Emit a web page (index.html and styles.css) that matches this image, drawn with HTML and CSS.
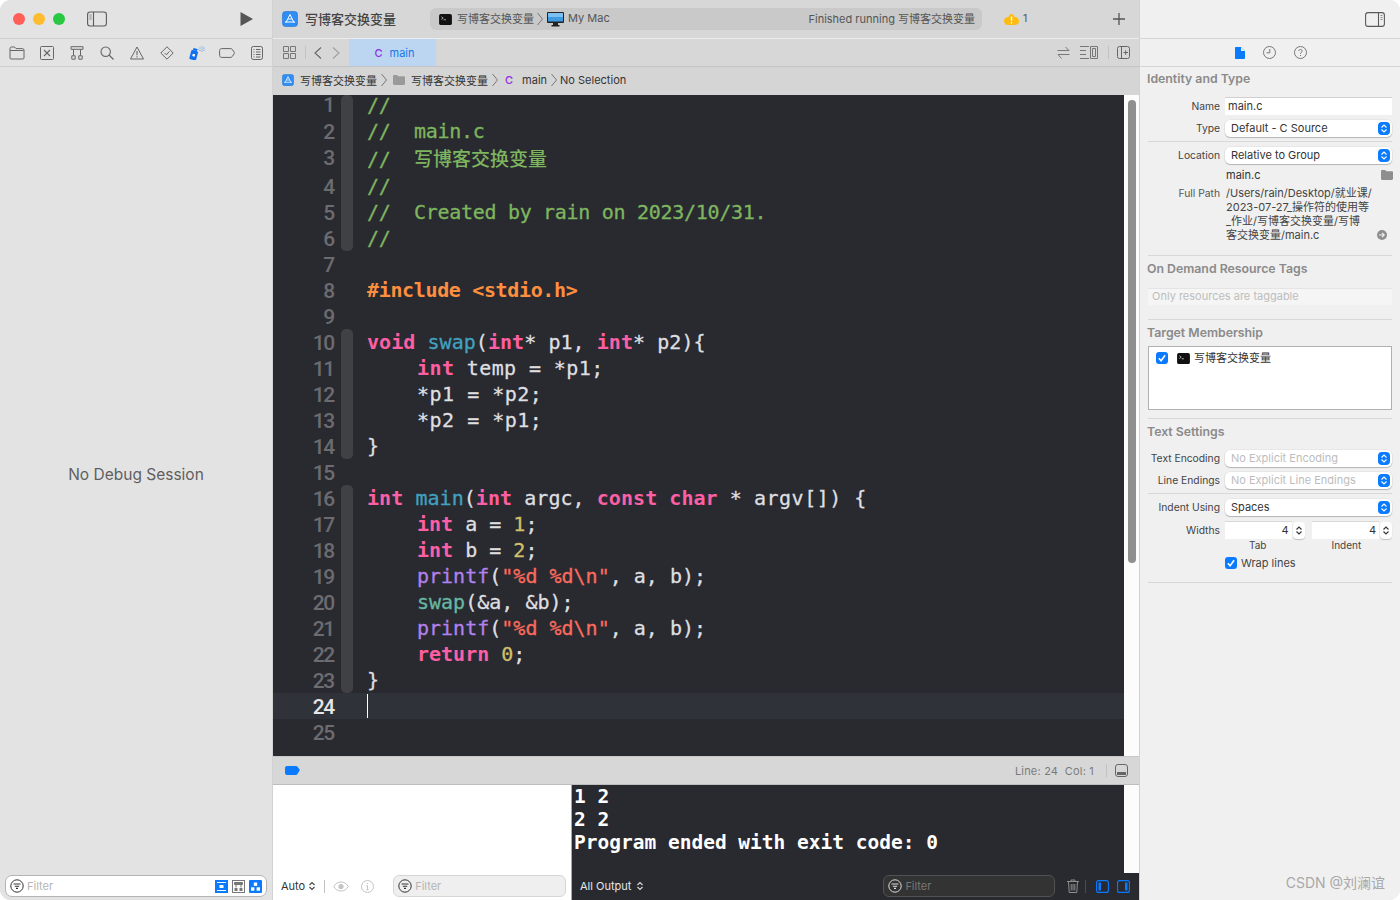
FILE: index.html
```html
<!DOCTYPE html>
<html lang="zh">
<head>
<meta charset="utf-8">
<title>写博客交换变量</title>
<link rel="stylesheet" href="styles.css">
</head>
<body>
<svg class="defs" width="0" height="0">
  <symbol id="filter" viewBox="0 0 14 14"><circle cx="7" cy="7" r="6.2" fill="none" stroke="currentColor" stroke-width="1"/><path d="M3.5 5h7M4.8 7.2h4.4M6 9.4h2" stroke="currentColor" stroke-width="1.1" fill="none"/></symbol>
  <symbol id="term" viewBox="0 0 14 12"><rect width="14" height="12" rx="2" fill="#111"/><path d="M2.5 3l2 1.5-2 1.5M5 6.3h2.5" stroke="#ddd" stroke-width=".8" fill="none"/></symbol>
  <symbol id="app" viewBox="0 0 16 16"><rect x=".5" y=".5" width="15" height="15" rx="3" fill="#2f8df5" stroke="#1a6fd0" stroke-width=".6"/><path d="M8 3.5L4 11.5M8 3.5l4 8M3 11h10M6 8h4" stroke="#fff" stroke-width="1" fill="none"/></symbol>
  <symbol id="updown" viewBox="0 0 8 10"><path d="M1.5 4L4 1.5 6.5 4M1.5 6L4 8.5 6.5 6" fill="none" stroke="currentColor" stroke-width="1.1"/></symbol>
</svg>
<div class="window">

  <aside class="left">
    <div class="titlebar left-title">
      <span class="light red"></span><span class="light yellow"></span><span class="light green"></span>
      <svg class="side-toggle" width="20" height="16" viewBox="0 0 20 16"><rect x=".6" y="1" width="18.8" height="14" rx="2.5" fill="none" stroke="#5a5a5a" stroke-width="1.1"/><path d="M6.5 1v14" stroke="#5a5a5a" stroke-width="1.1"/><path d="M2.3 4h2.4M2.3 6h2.4M2.3 8h2.4" stroke="#8a8a8a"/></svg>
      <svg class="play" width="13" height="14" viewBox="0 0 13 14"><path d="M.5 0L13 7 .5 14z" fill="#555"/></svg>
    </div>
    <nav class="navtabs">
      <span class="navicon"><svg width="16" height="14" viewBox="0 0 16 14"><path d="M1 3V2.4C1 1.6 1.6 1 2.4 1h3.2l1.4 1.6h6.6c.8 0 1.4.6 1.4 1.4v8c0 .6-.5 1-1 1H2c-.6 0-1-.4-1-1zM1 4.5h13.5" fill="none" stroke="#666" stroke-width="1"/></svg></span>
      <span class="navicon"><svg width="14" height="14" viewBox="0 0 14 14"><rect x=".5" y=".5" width="13" height="13" rx="1" fill="none" stroke="#666"/><path d="M4 4l6 6M10 4l-6 6" stroke="#666" stroke-width="1.1"/><circle cx="7" cy="7" r="1" fill="#666"/></svg></span>
      <span class="navicon"><svg width="14" height="14" viewBox="0 0 14 14"><path d="M1 .7h12v2.6H1zM3.5 3.3v6.2M10.5 3.3v6.2M1.8 9.8h3.4v3.4H1.8zM8.8 9.8h3.4v3.4H8.8z" fill="none" stroke="#666"/></svg></span>
      <span class="navicon"><svg width="14" height="14" viewBox="0 0 14 14"><circle cx="5.7" cy="5.7" r="4.7" fill="none" stroke="#666" stroke-width="1.1"/><path d="M9 9l4.5 4.5" stroke="#666" stroke-width="1.3"/></svg></span>
      <span class="navicon"><svg width="14" height="14" viewBox="0 0 14 14"><path d="M7 1L13.5 13H.5z" fill="none" stroke="#666" stroke-linejoin="round"/><path d="M7 5v4.2M7 10.3v1.2" stroke="#666" stroke-width="1.1"/></svg></span>
      <span class="navicon"><svg width="14" height="14" viewBox="0 0 14 14"><path d="M7 .8L13.2 7 7 13.2.8 7z" fill="none" stroke="#666" stroke-linejoin="round"/><path d="M4.6 7l1.8 1.8 3-3.4" fill="none" stroke="#666"/></svg></span>
      <span class="navicon"><svg width="16" height="14" viewBox="0 0 16 14"><g transform="rotate(15 5 8)"><rect x="1.5" y="4.5" width="7" height="9.5" rx="1.3" fill="#0f6ff0"/><rect x="3" y="2.2" width="4" height="2.300" fill="#0f6ff0"/><rect x="3.800" y="8" width="2.400" height="2.400" fill="#fff"/></g><path d="M8.500 3.500h1M10.500 2h1M10.500 4.500h1M12.500 .8h1M12.500 3h1M12.500 5.200h1M14.500 2h1M14.500 4.200h1" stroke="#4a8fe8" stroke-width=".9"/></svg></span>
      <span class="navicon"><svg width="16" height="10" viewBox="0 0 16 10"><path d="M2.500.6h9.300c.5 0 .9.200 1.200.5l2.300 3.200c.2.400.2.800 0 1.200L13 8.800c-.3.400-.7.600-1.200.6H2.500C1.400 9.400.6 8.600.6 7.500v-5C.6 1.400 1.400.6 2.500.6z" fill="none" stroke="#666"/></svg></span>
      <span class="navicon"><svg width="12" height="14" viewBox="0 0 12 14"><rect x=".5" y=".5" width="11" height="13" rx="1.800" fill="none" stroke="#666"/><path d="M2.500 3.500h1M5 3.500h4.500M2.500 6h1M5 6h4.500M2.500 8.500h1M5 8.500h4.500M2.500 11h1M5 11h4.500" stroke="#666"/></svg></span>
    </nav>
    <div class="nodebug">No Debug Session</div>
    <div class="left-filter">
      <svg class="fi"><use href="#filter"/></svg>
      <span class="ph">Filter</span>
      <svg class="sq sq1" width="13" height="13" viewBox="0 0 13 13"><rect width="13" height="13" fill="#0a7aff"/><path d="M2 2.500h9M2 10.500h9" stroke="#fff"/><rect x="4.500" y="5" width="4" height="3" fill="#fff"/></svg>
      <svg class="sq" width="13" height="13" viewBox="0 0 13 13"><rect x=".5" y=".5" width="12" height="12" fill="#fff" stroke="#777"/><path d="M2.500 2.500h8v2h-8zM4 4.500v3M9 4.500v3" fill="#777" stroke="#777"/><rect x="2.500" y="8" width="3" height="3" fill="#777"/><rect x="7.500" y="8" width="3" height="3" fill="#777"/></svg>
      <svg class="sq" width="13" height="13" viewBox="0 0 13 13"><rect width="13" height="13" rx="1" fill="#0a7aff"/><rect x="4.800" y="2.500" width="3.400" height="3.400" fill="#fff"/><rect x="2" y="7.300" width="3.400" height="3.400" fill="#fff"/><rect x="7.600" y="7.300" width="3.400" height="3.400" fill="#fff"/></svg>
    </div>
  </aside>

  <main class="center">
    <header class="titlebar center-title">
      <svg class="appicon"><use href="#app"/></svg>
      <span class="project">写博客交换变量</span>
      <div class="scheme">
        <svg class="termicon"><use href="#term"/></svg>
        <span>写博客交换变量</span>
        <svg class="chev" width="6" height="14" viewBox="0 0 6 14"><path d="M.5 1L5.500 7 .5 13" fill="none" stroke="#777"/></svg>
        <svg class="mac" width="17" height="15" viewBox="0 0 17 15"><rect width="17" height="11" rx="1" fill="#222"/><rect x="1" y="1" width="15" height="8.500" fill="#3f9be0"/><rect x="1" y="1" width="15" height="4" fill="#7cc0ef"/><path d="M6 11h5v2H6zM4.500 13h8v1.500h-8z" fill="#222"/></svg>
        <span class="mymac">My Mac</span>
        <span class="status">Finished running 写博客交换变量</span>
      </div>
      <svg class="warn" width="15" height="11" viewBox="0 0 15 11"><path d="M7.500 0c1 0 1.700.600 2.200 1.500l.6 1.300C13 3 15 4.700 15 7c0 2.300-1.500 4-3.600 4H3.600C1.500 11 0 9.300 0 7c0-2.300 2-4 4.700-4.200l.6-1.300C5.800.6 6.500 0 7.500 0z" fill="#febc11"/><path d="M7.500 2.500v4.300M7.500 8v1.500" stroke="#fff" stroke-width="1.300"/></svg>
      <span class="warncount">1</span>
      <svg class="plus" width="12" height="12" viewBox="0 0 12 12"><path d="M6 0v12M0 6h12" stroke="#555" stroke-width="1.300"/></svg>
    </header>
    <div class="tabbar">
      <svg class="gridicon" width="13" height="13" viewBox="0 0 13 13"><path d="M.5.500h5v5h-5zM7.500.500h5v5h-5zM.5 7.500h5v5h-5zM7.500 7.500h5v5h-5z" fill="none" stroke="#777"/></svg>
      <span class="vsep"></span>
      <svg class="back" width="8" height="12" viewBox="0 0 8 12"><path d="M7 .5L1 6l6 5.500" fill="none" stroke="#666" stroke-width="1.100"/></svg>
      <svg class="fwd" width="8" height="12" viewBox="0 0 8 12"><path d="M1 .5L7 6l-6 5.500" fill="none" stroke="#a0a0a0" stroke-width="1.100"/></svg>
      <div class="tab"><span class="c">C</span><span>main</span></div>
      <svg class="swapi" width="13" height="13" viewBox="0 0 13 13"><path d="M.5 4.500h11.500M8.500 1l3.500 3.500M12.500 8.500H1M4.500 12.500L1 8.500" fill="none" stroke="#777"/></svg>
      <svg class="linesi" width="18" height="13" viewBox="0 0 18 13"><path d="M0 .5h9M0 4.500h6M0 8.500h6M0 12.500h9" stroke="#777"/><path d="M10.500.5h7v12h-7zM12.500 2.500h3v8h-3z" fill="none" stroke="#777"/></svg>
      <span class="vsep rsep"></span>
      <svg class="addi" width="13" height="13" viewBox="0 0 13 13"><rect x=".5" y=".5" width="12" height="12" rx="2" fill="none" stroke="#666"/><path d="M4.500.5v12M6.500 6.500h4.500M8.700 4.300v4.500" stroke="#666"/></svg>
    </div>
    <div class="jumpbar">
      <svg class="appicon small"><use href="#app"/></svg>
      <span>写博客交换变量</span>
      <svg class="chev" width="6" height="14" viewBox="0 0 6 14"><path d="M.5 1L5.500 7 .5 13" fill="none" stroke="#777"/></svg>
      <svg class="folder" width="12" height="10" viewBox="0 0 12 10"><path d="M0 1.200C0 .5.500 0 1.200 0h3l1 1.300h5.600c.7 0 1.200.5 1.200 1.200v6.300c0 .7-.5 1.200-1.200 1.200H1.200C.5 10 0 9.500 0 8.800z" fill="#9a9a9a"/></svg>
      <span>写博客交换变量</span>
      <svg class="chev" width="6" height="14" viewBox="0 0 6 14"><path d="M.5 1L5.500 7 .5 13" fill="none" stroke="#777"/></svg>
      <span class="c cj">C</span>
      <span>main</span>
      <svg class="chev" width="6" height="14" viewBox="0 0 6 14"><path d="M.5 1L5.500 7 .5 13" fill="none" stroke="#777"/></svg>
      <span class="nosel">No Selection</span>
    </div>

    <section class="editor">
      <div class="code">
        <div class="ln first"><span class="num">1</span><span class="fold start"></span><span class="t cm">//</span></div>
        <div class="ln"><span class="num">2</span><span class="fold"></span><span class="t cm">//  main.c</span></div>
        <div class="ln tall"><span class="num">3</span><span class="fold"></span><span class="t cm">//  <span class="cjk">写博客交换变量</span></span></div>
        <div class="ln"><span class="num">4</span><span class="fold"></span><span class="t cm">//</span></div>
        <div class="ln"><span class="num">5</span><span class="fold"></span><span class="t cm">//  Created by rain on 2023/10/31.</span></div>
        <div class="ln"><span class="num">6</span><span class="fold end"></span><span class="t cm">//</span></div>
        <div class="ln"><span class="num">7</span><span class="nofold"></span></div>
        <div class="ln"><span class="num">8</span><span class="nofold"></span><span class="t pp">#include &lt;stdio.h&gt;</span></div>
        <div class="ln"><span class="num">9</span><span class="nofold"></span></div>
        <div class="ln"><span class="num">10</span><span class="fold start"></span><span class="t wide1"><b class="kw">void</b> <span class="fn">swap</span>(<b class="kw">int</b>* p1, <b class="kw">int</b>* p2){</span></div>
        <div class="ln"><span class="num">11</span><span class="fold"></span><span class="t ind wide2"><b class="kw">int</b> temp = *p1;</span></div>
        <div class="ln"><span class="num">12</span><span class="fold"></span><span class="t ind wide3">*p1 = *p2;</span></div>
        <div class="ln"><span class="num">13</span><span class="fold"></span><span class="t ind wide3">*p2 = *p1;</span></div>
        <div class="ln"><span class="num">14</span><span class="fold end"></span><span class="t">}</span></div>
        <div class="ln"><span class="num">15</span><span class="nofold"></span></div>
        <div class="ln"><span class="num">16</span><span class="fold start"></span><span class="t wide1"><b class="kw">int</b> <span class="fn">main</span>(<b class="kw">int</b> argc, <b class="kw">const</b> <b class="kw">char</b> * <span class="wide3">argv[]) {</span></span></div>
        <div class="ln"><span class="num">17</span><span class="fold"></span><span class="t ind"><b class="kw">int</b> a = <span class="n">1</span>;</span></div>
        <div class="ln"><span class="num">18</span><span class="fold"></span><span class="t ind"><b class="kw">int</b> b = <span class="n">2</span>;</span></div>
        <div class="ln"><span class="num">19</span><span class="fold"></span><span class="t ind"><span class="pf">printf</span>(<span class="s">"%d %d\n"</span>, a, b);</span></div>
        <div class="ln"><span class="num">20</span><span class="fold"></span><span class="t ind"><span class="call">swap</span>(&amp;a, &amp;b);</span></div>
        <div class="ln"><span class="num">21</span><span class="fold"></span><span class="t ind"><span class="pf">printf</span>(<span class="s">"%d %d\n"</span>, a, b);</span></div>
        <div class="ln"><span class="num">22</span><span class="fold"></span><span class="t ind"><b class="kw">return</b> <span class="n">0</span>;</span></div>
        <div class="ln"><span class="num">23</span><span class="fold end"></span><span class="t">}</span></div>
        <div class="ln cur"><span class="num">24</span><span class="nofold"></span><span class="caret"></span></div>
        <div class="ln"><span class="num">25</span><span class="nofold"></span></div>
      </div>
      <div class="vscroll"><span class="thumb"></span></div>
    </section>

    <div class="debugbar">
      <svg width="15" height="9" viewBox="0 0 15 9"><path d="M2 0h9c.6 0 1 .2 1.300.6l2.300 3c.2.400.2.500 0 .9l-2.300 3.800c-.3.400-.7.700-1.300.7H2c-1.100 0-2-.9-2-2V2C0 .9.900 0 2 0z" fill="#0a7aff"/></svg>
      <span class="linecol">Line: 24&nbsp;&nbsp;Col: 1</span>
      <span class="vsep"></span>
      <svg class="panel" width="13" height="13" viewBox="0 0 13 13"><rect x=".5" y=".5" width="12" height="12" rx="2.500" fill="none" stroke="#666"/><rect x="2" y="8" width="9" height="3" fill="#666"/></svg>
    </div>

    <section class="console">
      <div class="vars">
        <div class="spacer"></div>
        <div class="cbar">
          <span class="auto">Auto</span>
          <svg class="ud"><use href="#updown"/></svg>
          <span class="vsep"></span>
          <svg class="eye" width="16" height="11" viewBox="0 0 16 11"><path d="M.8 5.500C2.500 2.300 5 1 8 1s5.500 1.300 7.200 4.500C13.500 8.700 11 10 8 10S2.500 8.700.8 5.500z" fill="none" stroke="#c4c4c4"/><circle cx="8" cy="5.500" r="2.600" fill="#c4c4c4"/></svg>
          <svg class="info" width="13" height="13" viewBox="0 0 13 13"><circle cx="6.500" cy="6.500" r="6" fill="none" stroke="#c4c4c4"/><path d="M6.500 5.500v4.300M5.300 9.900h2.400M5.500 5.500h1M6.500 3v1" stroke="#c4c4c4"/></svg>
          <div class="filterbox light-f"><svg class="fi"><use href="#filter"/></svg><span class="ph">Filter</span></div>
        </div>
      </div>
      <div class="output">
        <div class="outrow">
          <pre class="outtext">1 2
2 2
Program ended with exit code: 0</pre>
          <div class="outscroll"></div>
        </div>
        <div class="cbar dark">
          <span class="allout">All Output</span>
          <svg class="ud"><use href="#updown"/></svg>
          <div class="filterbox dark-f"><svg class="fi"><use href="#filter"/></svg><span class="ph">Filter</span></div>
          <svg class="trash" width="12" height="14" viewBox="0 0 12 14"><path d="M0 2.500h12M4 2.500V1h4v1.500M1.500 2.500l.7 11h7.600l.7-11M4.200 5v6.500M6 5v6.500M7.800 5v6.500" fill="none" stroke="#8e8e8e"/></svg>
          <span class="vsep dsep"></span>
          <svg class="pane" width="13" height="13" viewBox="0 0 13 13"><rect x=".6" y=".6" width="11.800" height="11.800" rx="2" fill="none" stroke="#0a7aff" stroke-width="1.100"/><rect x="2.500" y="2.500" width="2.500" height="8" fill="#0a7aff"/></svg>
          <svg class="pane pane2" width="13" height="13" viewBox="0 0 13 13"><rect x=".6" y=".6" width="11.800" height="11.800" rx="2" fill="none" stroke="#0a7aff" stroke-width="1.100"/><rect x="8" y="2.500" width="2.500" height="8" fill="#0a7aff"/></svg>
        </div>
      </div>
    </section>
  </main>

  <aside class="right">
    <div class="titlebar right-title">
      <svg width="20" height="15" viewBox="0 0 20 15"><rect x=".6" y=".6" width="18.800" height="13.800" rx="2.500" fill="none" stroke="#5a5a5a" stroke-width="1.100"/><path d="M13.500.6v13.800" stroke="#5a5a5a" stroke-width="1.100"/><path d="M15.500 3.500h2M15.500 5.500h2M15.500 7.500h2" stroke="#8a8a8a"/></svg>
    </div>
    <div class="insp-tabs">
      <svg width="10" height="12" viewBox="0 0 10 12"><path d="M1 0h5l4 4v7c0 .6-.4 1-1 1H1c-.6 0-1-.4-1-1V1c0-.6.4-1 1-1z" fill="#0a7aff"/><path d="M6 0v4h4z" fill="#f0f0f0"/></svg>
      <svg width="13" height="13" viewBox="0 0 13 13"><circle cx="6.500" cy="6.500" r="6" fill="none" stroke="#777"/><path d="M6.800 3v3.800H3.500" fill="none" stroke="#777"/></svg>
      <svg width="13" height="13" viewBox="0 0 13 13"><circle cx="6.500" cy="6.500" r="6" fill="none" stroke="#777"/><path d="M4.800 5c0-1 .8-1.500 1.700-1.500S8.200 4 8.200 5c0 1.200-1.700 1.300-1.700 2.700M6.500 9v1" fill="none" stroke="#777"/></svg>
    </div>

    <section class="sec sec1">
      <h3>Identity and Type</h3>
      <div class="row m11"><label>Name</label><span class="input">main.c</span></div>
      <div class="row m4"><label>Type</label><span class="select">Default - C Source<svg class="bluebtn"><use href="#updown"/></svg></span></div>
      <div class="hr"></div>
      <div class="row m4"><label>Location</label><span class="select">Relative to Group<svg class="bluebtn"><use href="#updown"/></svg></span></div>
      <div class="row m4 short"><label></label><span class="value">main.c</span>
        <svg width="12" height="10" viewBox="0 0 12 10"><path d="M0 1.200C0 .5.500 0 1.200 0h3l1 1.300h5.600c.7 0 1.200.5 1.200 1.200v6.300c0 .7-.5 1.200-1.200 1.200H1.200C.5 10 0 9.500 0 8.800z" fill="#8e8e8e"/></svg>
      </div>
      <div class="row m4 path"><label>Full Path</label><span class="pathtext">/Users/rain/Desktop/就业课/<br>2023-07-27_操作符的使用等<br>_作业/写博客交换变量/写博<br>客交换变量/main.c</span>
        <svg class="goto" width="10" height="10" viewBox="0 0 10 10"><circle cx="5" cy="5" r="5" fill="#8e8e8e"/><path d="M2 5h5M5 2.800L7.200 5 5 7.200" fill="none" stroke="#f0f0f0" stroke-width="1.200"/></svg>
      </div>
    </section>

    <section class="sec sec2">
      <h3>On Demand Resource Tags</h3>
      <div class="tagfield">Only resources are taggable</div>
    </section>

    <section class="sec sec3">
      <h3>Target Membership</h3>
      <div class="targets">
        <span class="check"><svg width="12" height="12" viewBox="0 0 12 12"><path d="M2.800 6.200l2.300 2.500 4-5.400" fill="none" stroke="#fff" stroke-width="1.600"/></svg></span>
        <svg class="termicon"><use href="#term"/></svg>
        <span>写博客交换变量</span>
      </div>
    </section>

    <section class="sec sec4">
      <h3>Text Settings</h3>
      <div class="row m10"><label>Text Encoding</label><span class="select off">No Explicit Encoding<svg class="bluebtn"><use href="#updown"/></svg></span></div>
      <div class="row m4"><label>Line Endings</label><span class="select off">No Explicit Line Endings<svg class="bluebtn"><use href="#updown"/></svg></span></div>
      <div class="hr"></div>
      <div class="row m4"><label>Indent Using</label><span class="select">Spaces<svg class="bluebtn"><use href="#updown"/></svg></span></div>
      <div class="row m5"><label>Widths</label>
        <span class="num-input">4</span><span class="stepper"><svg><use href="#updown"/></svg></span>
        <span class="num-input second">4</span><span class="stepper"><svg><use href="#updown"/></svg></span>
      </div>
      <div class="subl"><span class="tab-l">Tab</span><span class="ind-l">Indent</span></div>
      <div class="wrap">
        <span class="check small"><svg width="12" height="12" viewBox="0 0 12 12"><path d="M2.800 6.200l2.300 2.500 4-5.400" fill="none" stroke="#fff" stroke-width="1.600"/></svg></span>
        <span>Wrap lines</span>
      </div>
    </section>
    <div class="watermark">CSDN @刘澜谊</div>
  </aside>
</div>
</body>
</html>
```

FILE: styles.css
```css
* { box-sizing: border-box; }
html, body { margin: 0; height: 100%; background: #fff; overflow: hidden; }
body { font-family: Inter, "Noto Sans CJK SC", sans-serif; font-size: 11px; color: #333; }
.defs { position: absolute; }
svg { display: block; flex: none; }
.window { width: 1400px; height: 900px; display: grid; grid-template-columns: 273px 866px 261px; border-radius: 11px; overflow: hidden; background: #e3e3e3; }
.titlebar { height: 39px; display: flex; align-items: center; border-bottom: 1px solid #cfcfcf; flex: none; }

/* left */
.left { background: #e3e3e3; display: flex; flex-direction: column; border-right: 1px solid #d2d2d2; height: 900px; }
.left-title { padding-left: 13px; }
.light { width: 12px; height: 12px; border-radius: 50%; margin-right: 8px; }
.red { background: #ff5f57; } .yellow { background: #febc2e; } .green { background: #28c840; }
.side-toggle { margin-left: 14px; }
.play { margin-left: 133px; }
.navtabs { height: 28px; display: flex; align-items: center; padding-left: 2px; border-bottom: 1px solid #cfcfcf; flex: none; }
.navicon { width: 30px; display: flex; justify-content: center; }
.nodebug { flex: 1; display: flex; align-items: center; justify-content: center; font-size: 15.500px; color: #5f5f5f; padding-top: 7px; }
.left-filter { margin: 0 5px 3px; height: 22px; border-radius: 7px; background: #fff; border: 1px solid #b4b4b4; display: flex; align-items: center; padding: 0 4px; flex: none; width: 262px; }
.fi { width: 14px; height: 14px; color: #333; flex: none; }
.ph { color: #b5b5b5; margin-left: 3px; font-size: 11px; flex: 1; }
.sq { margin-left: 4px; }

/* center */
.center { display: flex; flex-direction: column; height: 900px; min-width: 0; background: #d7d7d7; }
.center-title { padding-left: 9px; border-bottom-color: #ececec; }
.appicon { width: 16px; height: 16px; }
.appicon.small { width: 12px; height: 12px; }
.project { margin-left: 7px; font-size: 13px; font-weight: 500; color: #444; width: 125px; padding-bottom: 2px; }
.scheme { width: 552px; height: 22px; background: #c9c9c9; border-radius: 6px; display: flex; align-items: center; padding: 0 7px 0 9px; color: #555; font-size: 11px; flex: none; }
.scheme span { padding-bottom: 2px; }
.termicon { width: 13px; height: 11px; margin-right: 5px; }
.scheme .chev { margin: 0 3px 0 3px; }
.mac { margin-left: 1px; }
.mymac { margin-left: 4px; }
.status { margin-left: auto; }
.warn { margin-left: 22px; }
.warncount { margin-left: 4px; color: #555; font-size: 10.500px; padding-bottom: 1px; }
.plus { margin-left: 86px; }
.tabbar { height: 28px; display: flex; align-items: center; padding-left: 10px; border-bottom: 1px solid #c4c4c4; flex: none; }
.vsep { width: 1px; height: 13px; background: #c2c2c2; display: block; flex: none; }
.tabbar > .vsep:first-of-type { margin-left: 9px; }
.back { margin-left: 8px; }
.fwd { margin-left: 10px; }
.tab { width: 87px; height: 27px; margin-left: 9px; background: #bcd6f1; display: flex; align-items: center; justify-content: center; gap: 7px; color: #1478ea; font-size: 11px; padding-left: 4px; flex: none; }
.c { color: #8e2fe8; font-weight: 500; }
.swapi { margin-left: auto; }
.linesi { margin-left: 10px; }
.tabbar > .rsep { margin: 0 8px 0 10px; }
.addi { margin-right: 9px; }
.jumpbar { height: 28px; display: flex; align-items: center; padding: 0 0 2px 9px; color: #333; font-size: 11px; background: #d5d5d5; flex: none; }
.jumpbar .appicon { margin-right: 6px; }
.jumpbar .chev { margin: 0 0 0 4px; }
.jumpbar .folder { margin: 0 6px 0 6px; }
.jumpbar .cj { margin: 0 9px 0 7px; }
.jumpbar .nosel { margin-left: 3px; }

.editor { height: 662px; background: #292a30; display: flex; flex: none; border-bottom: 1px solid #c8c8c8; }
.code { flex: 1; min-width: 0; }
.ln { height: 26px; display: flex; align-items: center; font-family: "DejaVu Sans Mono", "Noto Sans CJK SC", monospace; font-size: 20px; color: #dfdfe0; white-space: pre; -webkit-text-stroke: .3px; }
.ln.first { height: 23px; align-items: flex-start; line-height: 20px; }
.ln.tall { height: 29px; }
.tall .t { padding-bottom: 3px; }
.tall .num { padding-bottom: 2px; }
.ln.cur { background: #2f3239; }
.num { width: 62px; padding-right: 1px; text-align: right; font-family: Roboto, sans-serif; font-size: 21px; font-weight: 500; letter-spacing: -1.300px; color: #6c6c70; flex: none; -webkit-text-stroke: 0; padding-top: 1px; }
.first .num { padding-top: 0; }
.cur .num { color: #e6e6e6; }
.fold, .nofold { width: 12px; height: 100%; margin-left: 6px; flex: none; }
.fold { background: #404045; }
.fold.start { border-radius: 5px 5px 0 0; }
.fold.end { border-radius: 0 0 5px 5px; }
.t { margin-left: 14px; }
.t.ind { margin-left: 64px; }
.wide1 { letter-spacing: .05px; }
.wide2 { letter-spacing: .4px; }
.wide3 { letter-spacing: .5px; }
.cm { color: #7eb55f; letter-spacing: -.3px; }
.cjk { font-family: "Noto Sans CJK SC", sans-serif; font-weight: 500; font-size: 19px; letter-spacing: 0; -webkit-text-stroke: 0; }
.pp { color: #fd8f3f; font-weight: 700; letter-spacing: -.35px; -webkit-text-stroke: 0; }
.kw { color: #fc5fa3; font-weight: 700; -webkit-text-stroke: 0; }
.fn { color: #41a1c0; }
.call { color: #67b7a4; }
.pf { color: #b281eb; }
.s { color: #fc6a5d; }
.n { color: #d0bf69; }
.caret { width: 1px; height: 24px; background: #fff; margin-left: 14px; }
.vscroll { width: 15px; background: #fcfcfc; flex: none; padding: 5px 0 0 4px; }
.thumb { display: block; width: 8px; height: 463px; border-radius: 4px; background: #8f8f8f; }
.debugbar { height: 28px; display: flex; align-items: center; padding: 0 11px 0 12px; border-bottom: 1px solid #bdbdbd; flex: none; }
.linecol { margin-left: auto; color: #7a7a7a; font-size: 11px; letter-spacing: .2px; }
.debugbar .vsep { margin: 0 8px 0 12px; }

.console { flex: 1; display: flex; min-height: 0; }
.vars { width: 299px; background: #fff; display: flex; flex-direction: column; border-right: 1px solid #a8a8a8; flex: none; }
.spacer { flex: 1; }
.output { flex: 1; display: flex; flex-direction: column; background: #292a30; min-width: 0; }
.outrow { flex: 1; display: flex; min-height: 0; }
.outtext { margin: 0; flex: 1; padding: 0 0 0 2px; font-family: "DejaVu Sans Mono", monospace; font-size: 19.500px; line-height: 23px; font-weight: 700; color: #fff; }
.outscroll { width: 15px; background: #fcfcfc; flex: none; }
.cbar { height: 27px; display: flex; align-items: center; flex: none; font-size: 11px; padding-bottom: 1px; }
.vars .cbar { padding: 0 0 1px 8px; color: #333; }
.ud { width: 8px; height: 10px; margin-left: 3px; color: #444; }
.vars .vsep { margin-left: 8px; }
.eye { margin-left: 8px; }
.info { margin-left: 12px; }
.filterbox { height: 22px; border-radius: 6px; display: flex; align-items: center; padding: 0 4px; flex: none; }
.light-f { margin-left: 19px; width: 173px; background: #efefef; border: 1px solid #d6d6d6; }
.dark { padding-left: 8px; color: #e6e6e6; }
.dark .ud { color: #ddd; margin-left: 5px; }
.dark-f { margin-left: 239px; width: 172px; background: #333; border: 1px solid #515151; }
.dark-f .fi { color: #ddd; }
.dark-f .ph { color: #777; }
.trash { margin-left: 12px; }
.dsep { margin-left: 6px; background: #4a4a4f; }
.pane { margin-left: 10px; }
.pane2 { margin-left: 8px; }

/* right */
.right { background: #f0f0f0; height: 900px; display: flex; flex-direction: column; border-left: 1px solid #d2d2d2; }
.right-title { justify-content: flex-end; padding-right: 15px; border-bottom-color: #d4d4d4; }
.insp-tabs { height: 28px; display: flex; align-items: center; justify-content: center; gap: 18px; padding-left: 2px; border-bottom: 1px solid #d4d4d4; flex: none; }
.sec { margin: 0 8px 0 8px; border-bottom: 1px solid #d8d8d8; flex: none; }
.hr { margin-top: 4px; height: 1px; background: #d8d8d8; }
h3 { margin: 0 0 0 -1px; height: 14px; line-height: 14px; font-size: 12.300px; font-weight: 600; color: #8a8a8a; }
.sec1 { padding: 5px 0 13px; }
.sec2 { padding: 6px 0 14px; }
.sec3 { padding: 6px 0 8px; }
.sec4 { padding: 6px 0 12px; }
.row { display: flex; align-items: center; height: 18px; }
.m4 { margin-top: 4px; } .m5 { margin-top: 5px; } .m10 { margin-top: 10px; } .m11 { margin-top: 11px; }
.row.short { height: 14px; }
.row.short svg { margin-left: auto; margin-right: -1px; }
.row.path { height: 56px; align-items: flex-start; position: relative; }
label { width: 72px; text-align: right; margin-right: 5px; font-size: 10.300px; color: #444; flex: none; white-space: nowrap; }
.path label { line-height: 14px; color: #555; }
.input { width: 167px; height: 18px; background: #fff; border-top: 1px solid #d0d0d0; padding-left: 3px; line-height: 16px; font-size: 11px; color: #333; }
.select { width: 167px; height: 17px; background: #fff; border-radius: 5px; box-shadow: 0 1px 1px rgba(0,0,0,.22), 0 0 0 .5px rgba(0,0,0,.07); padding-left: 6px; display: flex; align-items: center; justify-content: space-between; padding-right: 2px; font-size: 11px; color: #333; }
.select.off { color: #bdbdbd; }
.bluebtn { width: 12px; height: 13px; background: #0a7aff; border-radius: 4px; color: #fff; padding: 1px 2px; }
.value { font-size: 11px; margin-left: 1px; color: #333; }
.pathtext { font-size: 11px; line-height: 14px; margin-left: 1px; color: #444; white-space: nowrap; }
.goto { position: absolute; right: 5px; bottom: 2px; }
.tagfield { margin-top: 12px; height: 17px; background: #f5f5f5; border-top: 1px solid #e4e4e4; padding-left: 4px; line-height: 15px; font-size: 11px; color: #bdbdbd; }
.targets { margin-top: 6px; height: 64px; background: #fff; border: 1px solid #b0b0b0; display: flex; align-items: flex-start; padding: 5px 0 0 7px; font-size: 11px; color: #333; line-height: 13px; }
.targets .termicon { margin: 1px 4px 0 9px; }
.check { width: 12px; height: 12px; background: #0a7aff; border-radius: 3px; display: block; flex: none; }
.num-input { width: 67px; height: 18px; background: #fff; border-top: 1px solid #d8d8d8; text-align: right; padding-right: 3px; line-height: 16px; font-size: 11px; color: #333; }
.num-input.second { margin-left: 7px; width: 68px; }
.stepper { width: 12px; height: 17px; margin-left: 1px; background: #fff; border-radius: 4px; box-shadow: 0 1px 1px rgba(0,0,0,.2); padding: 2px; color: #333; }
.stepper svg { width: 8px; height: 13px; }
.subl { height: 12px; display: flex; font-size: 10px; color: #444; line-height: 12px; }
.tab-l { margin-left: 101px; }
.ind-l { margin-left: 65px; }
.wrap { margin: 5px 0 0 77px; height: 14px; display: flex; align-items: center; gap: 4px; font-size: 11px; color: #444; }
.watermark { margin-top: auto; padding: 0 15px 9px 0; text-align: right; font-size: 14px; color: #a9a9a9; line-height: 17px; }
```
